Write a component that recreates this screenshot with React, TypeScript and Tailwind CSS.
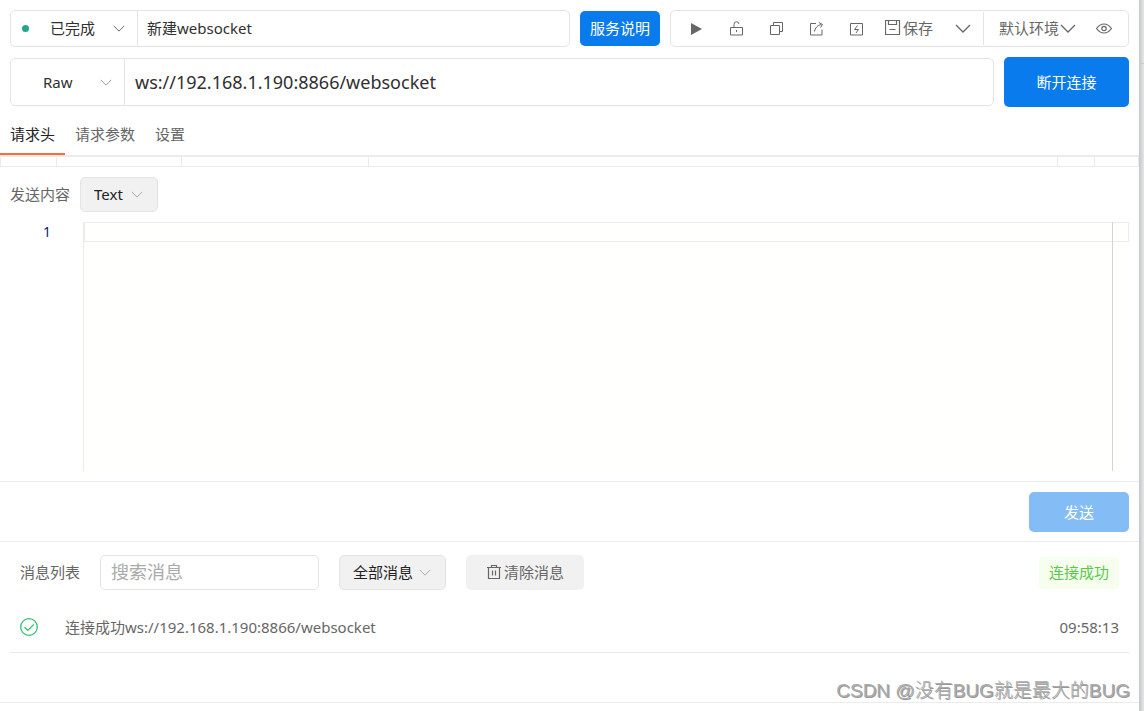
import type { ReactNode } from "react";

const tabs = ["请求头", "请求参数", "设置"];

function Chevron({ className }: { className: string }) {
  return (
    <svg className={className} viewBox="0 0 16 9" fill="none" stroke="currentColor" aria-hidden="true">
      <path d="M1 1l7 7 7-7" strokeWidth="1.3" />
    </svg>
  );
}

function ToolButton({ label, children }: { label: string; children: ReactNode }) {
  return (
    <button type="button" aria-label={label} className="flex h-full w-10 items-center justify-center">
      <svg className="h-4 w-4" viewBox="0 0 16 16" fill="none" stroke="currentColor" aria-hidden="true">
        {children}
      </svg>
    </button>
  );
}

function TopBar() {
  return (
    <div className="flex items-center gap-2.5">
      <div className="flex h-[37px] min-w-0 flex-1 rounded-[5px] border border-[#e4e4e4]">
        <div className="relative flex w-[127px] flex-none items-center border-r border-[#e4e4e4]">
          <span className="ml-[11px] h-[7px] w-[7px] rounded-full bg-[#26a58d]" />
          <select aria-label="状态" className="absolute inset-0 w-full appearance-none bg-transparent pb-0.5 pl-[39px] text-[#303030] outline-none">
            <option>已完成</option>
          </select>
          <Chevron className="pointer-events-none mr-3 ml-auto h-[7px] w-3 text-[#666]" />
        </div>
        <input aria-label="名称" defaultValue="新建websocket" className="min-w-0 flex-1 bg-transparent px-[9px] pb-0.5 text-[#303030] outline-none" />
      </div>
      <button type="button" className="h-[35px] w-20 rounded-[5px] bg-[#097bed] pb-0.5 text-white">服务说明</button>
      <div className="flex h-[37px] flex-none items-center rounded-[5px] border border-[#e4e4e4] pr-1 pl-[5px] text-[#666]">
        <ToolButton label="运行">
          <path d="M3 2v12l11-6z" fill="currentColor" stroke="none" />
        </ToolButton>
        <ToolButton label="锁定">
          <path d="M2.5 6.5h12V14h-12zM6 6.5v-3a2.5 2.500 0 0 1 5-.5M8.500 9v2" />
        </ToolButton>
        <ToolButton label="复制">
          <path d="M2.500 4.500h9v9h-9zM5.500 4.500v-3h9v9h-3" />
        </ToolButton>
        <ToolButton label="分享">
          <path d="M8 2.500H2.500V14H14V8.500M6.500 10.500C7 7 9.500 4 13.500 3.500M11 1.500l3.500 2-2 3" />
        </ToolButton>
        <ToolButton label="快捷">
          <path d="M2.500 2.500h12V14h-12zM9.500 4.500l-3 4h4L8 12" />
        </ToolButton>
        <button type="button" className="flex w-[67px] items-center gap-0.5 pb-0.5 pl-[9px]">
          <svg className="h-4 w-4 flex-none" viewBox="0 0 16 16" fill="none" stroke="currentColor" aria-hidden="true">
            <path d="M.5.5h14v14H.5zM3.500.5v4h8v-4M4.500 9.500h6" strokeWidth="1.200" />
          </svg>
          保存
        </button>
        <button type="button" aria-label="更多" className="flex w-10 items-center justify-center">
          <Chevron className="h-[9px] w-4" />
        </button>
        <div className="relative flex h-[33px] w-[101px] items-center border-l border-[#e4e4e4]">
          <select aria-label="环境" className="absolute inset-0 w-full appearance-none bg-transparent pb-0.5 pl-[15px] outline-none">
            <option>默认环境</option>
          </select>
          <Chevron className="pointer-events-none mr-2 ml-auto h-[9px] w-4" />
        </div>
        <ToolButton label="查看">
          <path d="M.5 7.500C3 4 5.500 3 8 3s5 1 7.500 4.500C13 11 10.500 12 8 12S3 11 .5 7.500z" strokeWidth="1.200" />
          <circle cx="8" cy="7.500" r="2.200" strokeWidth="1.200" />
        </ToolButton>
      </div>
    </div>
  );
}

function UrlBar() {
  return (
    <div className="mt-2.5 flex items-center gap-2.5">
      <div className="flex h-12 min-w-0 flex-1 rounded-[5px] border border-[#e4e4e4]">
        <div className="relative flex w-[114px] flex-none items-center border-r border-[#e4e4e4]">
          <select aria-label="类型" className="absolute inset-0 w-full appearance-none bg-transparent pl-8 text-[#303030] outline-none">
            <option>Raw</option>
          </select>
          <Chevron className="pointer-events-none mr-3 ml-auto h-[7px] w-3 text-[#999]" />
        </div>
        <input aria-label="地址" defaultValue="ws://192.168.1.190:8866/websocket" className="min-w-0 flex-1 bg-transparent px-2.5 text-lg text-[#303030] outline-none" />
      </div>
      <button type="button" className="h-[50px] w-[125px] rounded-[5px] bg-[#097bed] text-white">断开连接</button>
    </div>
  );
}

function HeaderTable() {
  return (
    <table aria-label="请求头" className="h-2.5 w-full table-fixed border-collapse border border-t-0 border-[#ebebeb]">
      <tbody>
        <tr>
          <td className="w-14 border-r border-[#ebebeb]" />
          <td className="w-[125px] border-r border-[#ebebeb]" />
          <td className="w-[187px] border-r border-[#ebebeb]" />
          <td className="border-r border-[#ebebeb]" />
          <td className="w-[37px] border-r border-[#ebebeb]" />
          <td className="w-11" />
        </tr>
      </tbody>
    </table>
  );
}

function Editor() {
  return (
    <div className="mx-2.5 mt-2.5 mb-2.5 flex h-[249px]">
      <div className="w-[73px] flex-none pr-8 text-right text-sm leading-5 text-[#0b216f]">1</div>
      <div className="relative flex-1 border-l border-[#ebebeb] bg-[#fffffd]">
        <div className="absolute inset-x-0 top-0 h-5 border border-[#ebebeb]" />
        <div className="absolute inset-y-0 right-4 w-px bg-[#d4d4d4]" />
        <textarea aria-label="发送内容" className="relative h-full w-full resize-none bg-transparent px-1 text-sm leading-5 outline-none" />
      </div>
    </div>
  );
}

function Messages() {
  return (
    <section className="border-t border-[#ebebeb] pt-[13px]">
      <div className="flex items-center px-5">
        <label htmlFor="search" className="w-20 pb-0.5 text-[#666]">消息列表</label>
        <input id="search" placeholder="搜索消息" className="h-[35px] w-[219px] rounded-[5px] border border-[#e4e4e4] px-2.5 pb-0.5 text-lg outline-none placeholder:text-[#aaa]" />
        <div className="relative ml-5 flex h-[35px] w-[107px] items-center rounded-[5px] border border-[#e4e4e4] bg-[#f1f1f1]">
          <select aria-label="消息类型" className="absolute inset-0 w-full appearance-none bg-transparent pb-0.5 pl-[13px] text-[#222] outline-none">
            <option>全部消息</option>
          </select>
          <Chevron className="pointer-events-none mr-3.5 ml-auto h-[7px] w-3 text-[#aaa]" />
        </div>
        <button type="button" className="ml-5 flex h-[35px] w-[118px] items-center justify-center gap-0.5 rounded-[5px] bg-[#f1f1f1] pb-0.5 text-[#666]">
          <svg className="h-4 w-4" viewBox="0 0 16 16" fill="none" stroke="currentColor" aria-hidden="true">
            <path d="M1 3.500h14M5.500 3V1.500h5V3M2.500 3.500v11h11v-11M6.500 6.500v5M9.500 6.500v5" strokeWidth="1.200" />
          </svg>
          清除消息
        </button>
        <span className="ml-auto flex h-8 w-20 items-center justify-center rounded-[4px] bg-[#f6ffee] pb-0.5 text-[#5bc84b]">连接成功</span>
      </div>
      <ul className="mx-2.5 mt-3">
        <li className="flex h-[51px] items-center border-b border-[#ebebeb] px-2.5 text-[#666]">
          <svg className="h-[18px] w-[18px] text-[#32c071]" viewBox="0 0 18 18" fill="none" stroke="currentColor" aria-hidden="true">
            <circle cx="9" cy="9" r="8.300" strokeWidth="1.300" />
            <path d="M4.500 9.200l3.300 3.200 6-6" strokeWidth="1.300" />
          </svg>
          <span className="ml-[27px]">连接成功ws://192.168.1.190:8866/websocket</span>
          <time className="ml-auto">09:58:13</time>
        </li>
      </ul>
    </section>
  );
}

export default function App() {
  return (
    <div className="relative flex min-h-screen overflow-hidden bg-white font-['Noto_Sans','Noto_Sans_CJK_SC',sans-serif] text-[15px] leading-5">
      <main className="flex min-w-0 flex-1 flex-col">
        <div className="px-2.5 pt-2.5">
          <TopBar />
          <UrlBar />
        </div>
        <nav className="flex h-[50px] flex-none border-b-2 border-[#ebebeb]">
          {tabs.map((tab, i) => (
            <button
              key={tab}
              type="button"
              className={
                i === 0
                  ? "h-12 border-b-2 border-[#ff6c37] px-2.5 pt-2 text-[#222]"
                  : "h-12 border-b-2 border-transparent px-2.5 pt-2 text-[#666]"
              }
            >
              {tab}
            </button>
          ))}
        </nav>
        <HeaderTable />
        <div className="mt-2.5 flex items-center px-2.5">
          <label htmlFor="format" className="w-[70px] pb-0.5 text-[#666]">发送内容</label>
          <div className="relative flex h-[35px] w-[78px] items-center rounded-[5px] border border-[#e4e4e4] bg-[#f1f1f1]">
            <select id="format" className="absolute inset-0 w-full appearance-none bg-transparent pb-0.5 pl-[13px] text-[#222] outline-none">
              <option>Text</option>
            </select>
            <Chevron className="pointer-events-none mr-3.5 ml-auto h-[7px] w-3 text-[#aaa]" />
          </div>
        </div>
        <Editor />
        <div className="flex h-[60px] flex-none items-center justify-end border-t border-[#ebebeb] px-2.5">
          <button type="button" disabled className="h-10 w-[100px] rounded-[5px] bg-[#84bcf5] text-white">发送</button>
        </div>
        <Messages />
        <footer className="mt-auto h-[9px] border-t border-[#ebebeb]" />
      </main>
      <aside className="w-[5px] flex-none bg-linear-to-r from-[#c4c6c8] to-[#e4e6e8]">
        <div className="h-16 border-b border-[#c8cacc]" />
      </aside>
      <p className="absolute right-3.5 bottom-2 font-['Liberation_Sans','Noto_Sans_CJK_SC',sans-serif] text-[19px] leading-6 font-light text-[#aaa] [text-shadow:1px_1px_0_#999]">
        CSDN @没有BUG就是最大的BUG
      </p>
    </div>
  );
}
